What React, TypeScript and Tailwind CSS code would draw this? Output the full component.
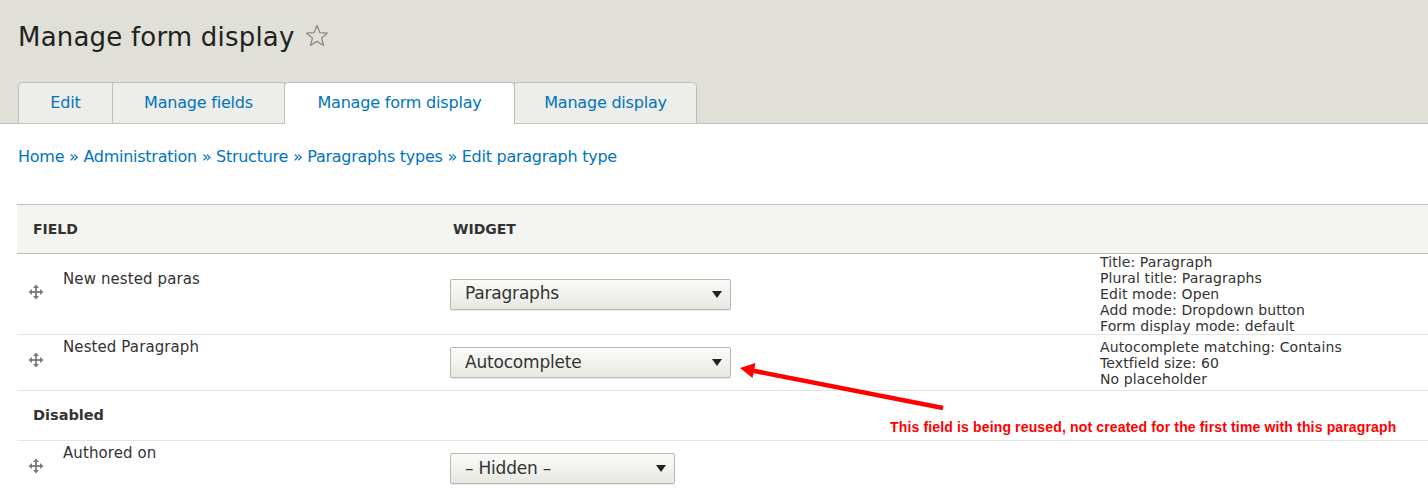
import React from "react";

const font = { fontFamily: '"DejaVu Sans", Verdana, sans-serif' };

function DragIcon() {
  return (
    <svg width="16" height="16" viewBox="0 0 16 16" className="-mt-[5px] shrink-0">
      <g fill="#7a7a7a">
        <rect x="7.1" y="3" width="1.8" height="10" />
        <rect x="3" y="7.1" width="10" height="1.8" />
        <polygon points="8,0.5 11,4 5,4" />
        <polygon points="8,15.5 11,12 5,12" />
        <polygon points="0.5,8 4,5 4,11" />
        <polygon points="15.5,8 12,5 12,11" />
      </g>
    </svg>
  );
}

function Select({ label, width }: { label: string; width: string }) {
  return (
    <div
      className={`${width} h-[31px] flex items-center justify-between border border-[#b8b8ae] rounded-[2px] bg-gradient-to-b from-[#fbfbf9] to-[#e8e8e2] pl-[14px] pr-[8px] text-[17px] text-[#333] shadow-[0_1px_1px_rgba(0,0,0,0.08)]`}
    >
      <span className="tracking-[-0.2px]">{label}</span>
      <svg width="10" height="7" viewBox="0 0 10 7">
        <polygon points="0,0 10,0 5,7" fill="#222" />
      </svg>
    </div>
  );
}

function FieldRow({
  label,
  select,
  selectWidth,
  summary,
  height,
}: {
  label: string;
  select: string;
  selectWidth: string;
  summary: string[];
  height: string;
}) {
  return (
    <div className={`flex items-center ${height} border-b border-[#e6e4df]`}>
      <div className="w-[420px] shrink-0 flex items-center pl-[11px]">
        <DragIcon />
        <div className="ml-[19px] pb-[31px] leading-[20px] text-[15px] text-[#333] tracking-[0.1px]">{label}</div>
      </div>
      <div className="w-[653px] shrink-0 pl-[13px]">
        <Select label={select} width={selectWidth} />
      </div>
      <div className="pl-[10px] text-[14px] leading-[16px] text-[#333] tracking-[0.1px]">
        {summary.map((s) => (
          <div key={s}>{s}</div>
        ))}
      </div>
    </div>
  );
}

export default function App() {
  return (
    <div className="relative w-full min-h-[488px] bg-white overflow-hidden" style={font}>
      {/* Header */}
      <div className="bg-[#e0e0d8] border-b border-[#c4c4bc] pl-[18px] pt-[21px]">
        <div className="flex items-center h-[32px]">
          <h1 className="text-[26px] leading-[32px] text-[#222] font-normal tracking-[0.2px]">Manage form display</h1>
          <svg width="24" height="24" viewBox="0 0 24 24" className="ml-[10px] mt-[-2px]">
            <polygon
              points="12,1.5 14.9,8.6 22.5,9.1 16.6,14 18.5,21.5 12,17.4 5.5,21.5 7.4,14 1.5,9.1 9.1,8.6"
              fill="none"
              stroke="#8c8c80"
              strokeWidth="1.3"
              strokeLinejoin="round"
            />
          </svg>
        </div>
        <div className="flex mt-[29px] h-[42px] -mb-px">
          <div className="w-[95px] flex items-center justify-center bg-[#ededea] border border-[#bfbfba] border-b-[#c4c4bc] rounded-tl-[5px] text-[16px] text-[#0074bd] tracking-[-0.1px]">
            Edit
          </div>
          <div className="w-[173px] -ml-px flex items-center justify-center bg-[#ededea] border border-[#bfbfba] border-b-[#c4c4bc] text-[16px] text-[#0074bd] tracking-[-0.2px]">
            Manage fields
          </div>
          <div className="w-[231px] -ml-px flex items-center justify-center bg-white border border-[#bfbfba] border-b-white rounded-t-[5px] text-[16px] text-[#0074bd] tracking-[-0.2px]">
            Manage form display
          </div>
          <div className="w-[183px] -ml-px flex items-center justify-center bg-[#ededea] border border-[#bfbfba] border-b-[#c4c4bc] rounded-tr-[5px] text-[16px] text-[#0074bd] tracking-[-0.2px]">
            Manage display
          </div>
        </div>
      </div>

      {/* Breadcrumb */}
      <div className="pl-[18px] mt-[23px] leading-[20px] text-[16px] text-[#0074bd] tracking-[-0.26px]">
        Home » Administration » Structure » Paragraphs types » Edit paragraph type
      </div>

      {/* Table */}
      <div className="ml-[17px] mt-[37px]">
        <div className="flex items-center h-[50px] border-t border-b border-[#bfbfba] bg-[#f4f4f0] text-[14px] font-bold text-[#333] uppercase">
          <div className="w-[420px] shrink-0 pl-[16px]">Field</div>
          <div className="pl-[16px]">Widget</div>
        </div>
        <FieldRow
          label="New nested paras"
          select="Paragraphs"
          selectWidth="w-[281px]"
          height="h-[81px]"
          summary={[
            "Title: Paragraph",
            "Plural title: Paragraphs",
            "Edit mode: Open",
            "Add mode: Dropdown button",
            "Form display mode: default",
          ]}
        />
        <FieldRow
          label="Nested Paragraph"
          select="Autocomplete"
          selectWidth="w-[281px]"
          height="h-[56px]"
          summary={["Autocomplete matching: Contains", "Textfield size: 60", "No placeholder"]}
        />
        <div className="flex items-center h-[50px] border-b border-[#e6e4df] pl-[16px] text-[14.5px] font-bold text-[#333]">
          Disabled
        </div>
        <FieldRow label="Authored on" select="– Hidden –" selectWidth="w-[225px]" height="h-[56px]" summary={[]} />
      </div>

      {/* Annotation overlay */}
      <svg className="absolute left-0 top-0 pointer-events-none" width="1428" height="488">
        <line x1="943" y1="408" x2="752" y2="370.5" stroke="#ff0000" strokeWidth="4.5" />
        <polygon points="740,368 752.5,378 755.5,363" fill="#ff0000" />
      </svg>
      <div
        className="absolute left-[890px] top-[419px] leading-[16px] text-[14px] font-bold text-[#ff0000] whitespace-nowrap tracking-[0.15px]"
        style={{ fontFamily: '"Liberation Sans", Arial, sans-serif' }}
      >
        This field is being reused, not created for the first time with this paragraph
      </div>
    </div>
  );
}
